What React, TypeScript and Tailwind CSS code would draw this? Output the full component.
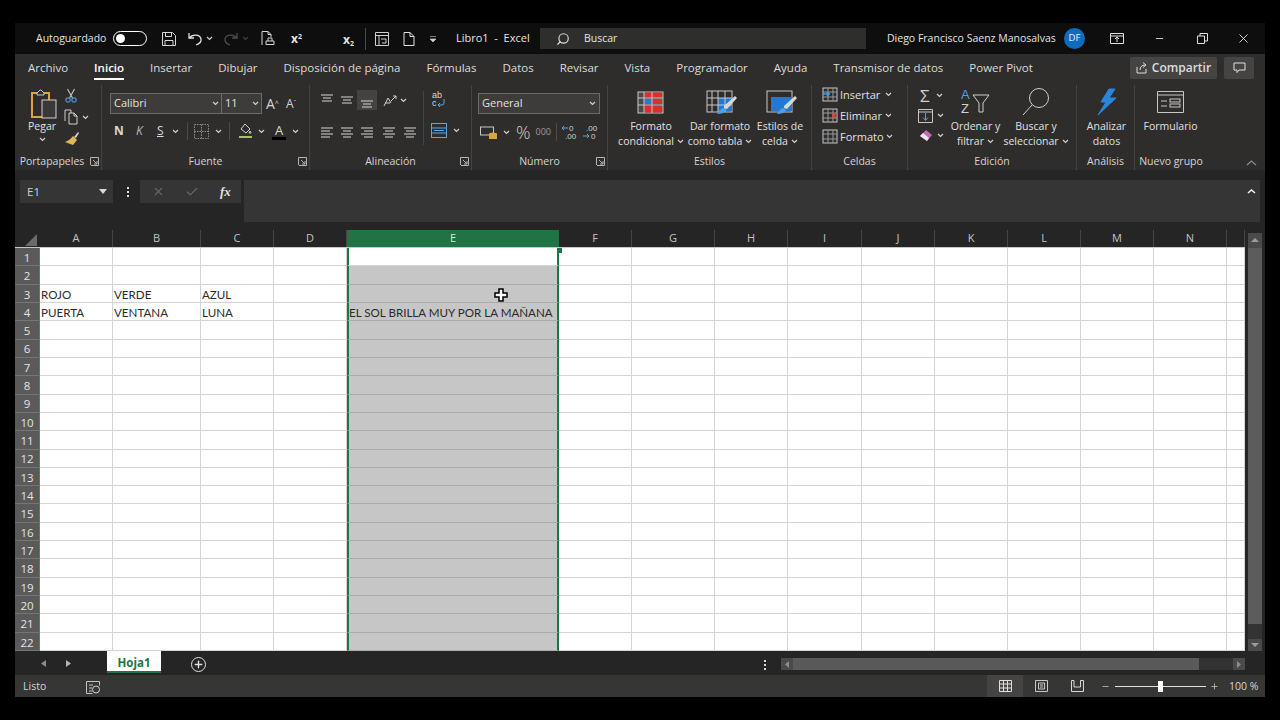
import type React from "react"
import { Search, X, Check, Plus, Minus } from "lucide-react"

const Chev = ({ className = "" }: { className?: string }) => (
  <svg width="7" height="5" viewBox="0 0 7 5" className={`shrink-0 ${className}`}>
    <path d="M1 1l2.5 2.5L6 1" fill="none" stroke="#d0d0d0" strokeWidth="1.2" />
  </svg>
)

const Launcher = ({ className = "" }: { className?: string }) => (
  <svg width="9" height="9" viewBox="0 0 9 9" className={className}>
    <path d="M.5 8V.5H8.500M8.500.5V8.500H1M3 3l4 4M4 7h3V4" fill="none" stroke="#b4b4b4" strokeWidth="1" />
  </svg>
)

const Lines = ({ aligns, highlight }: { aligns: string; highlight?: boolean }) => {
  const paths: Record<string, string> = {
    top: "M2 3h12M4 6h8M3 9h10",
    mid: "M2 5h12M4 8h8M3 11h10",
    bot: "M2 9h12M4 12h8M3 15h10",
    left: "M2 3h12M2 6h9M2 9h12M2 12h9",
    center: "M2 3h12M4 6h8M2 9h12M4 12h8",
    right: "M2 3h12M5 6h9M2 9h12M5 12h9",
  }
  return (
    <span className={`flex h-5 w-5 items-center justify-center ${highlight ? "bg-[#444342]" : ""}`}>
      <svg width="16" height="16" viewBox="0 0 16 16">
        <path d={paths[aligns]} stroke="#d6d6d6" strokeWidth="1" fill="none" />
      </svg>
    </span>
  )
}

const Group = ({ width, label, children, launcher, sep = true, labelClass = "" }: { width: number; label: string; children: React.ReactNode; launcher?: boolean; sep?: boolean; labelClass?: string }) => (
  <div className={`relative flex h-full shrink-0 flex-col ${sep ? "border-r border-[#444342]" : ""}`} style={{ width }}>
    <div className="min-h-0 flex-1">{children}</div>
    <div className={`flex h-[17px] items-center justify-center text-[10.500px] text-[#d4d4d4] ${labelClass}`}>{label}</div>
    {launcher && <Launcher className="absolute bottom-[4px] right-[2px]" />}
  </div>
)

const BigButton = ({ icon, lines, width, chev = true }: { icon: React.ReactNode; lines: string[]; width: number; chev?: boolean }) => (
  <div className="flex shrink-0 flex-col items-center" style={{ width }}>
    <div className="flex h-[31px] items-center justify-center">{icon}</div>
    <div className="mt-[2px] text-center text-[10.500px] leading-[15px] text-[#e0e0e0]">
      <div className="whitespace-nowrap">{lines[0]}</div>
      {lines[1] && (
        <div className="flex items-center justify-center gap-[3px] whitespace-nowrap">
          {lines[1]}
          {chev && <Chev />}
        </div>
      )}
    </div>
  </div>
)

const TableIcon = ({ variant }: { variant: "cond" | "table" | "cell" }) => (
  <svg width="36" height="30" viewBox="0 0 36 30">
    {variant === "cond" ? (
      <g>
        <rect x="5" y="5" width="25" height="21" fill="#4a4a4a" stroke="#c8c8c8" />
        <rect x="11" y="5.500" width="18" height="5" fill="#d9302c" />
        <rect x="11" y="12" width="8" height="5" fill="#2a78d0" />
        <rect x="19" y="12" width="10" height="5" fill="#d9302c" />
        <rect x="11" y="19" width="18" height="6.500" fill="#d9302c" />
        <path d="M11 5v21M19 5v21M5 11h25M5 18h25" stroke="#c8c8c8" />
      </g>
    ) : (
      <g>
        <rect x="5" y="4" width="25" height="21" fill="none" stroke="#c8c8c8" />
        <rect x={variant === "cell" ? 9 : 16} y={variant === "cell" ? 10 : 11} width={variant === "cell" ? 21 : 14} height={variant === "cell" ? 14 : 13} fill="#2478cf" />
        {variant === "table" && <path d="M5 11h25M5 18h25M16 4v21M10 4v21M23 4v21" stroke="#c8c8c8" />}
        <path d="M35 11L25 22l-3-1 0-2L33 9z" fill="#d8d8d8" />
        <path d="M22 21c-3 0-5 3-7 6 4 0 7-1 9-4z" fill="#4aa3e8" />
      </g>
    )}
  </svg>
)

const SmallTable = ({ kind }: { kind: "ins" | "del" | "fmt" }) => (
  <svg width="16" height="15" viewBox="0 0 16 15">
    <rect x="1" y="1" width="14" height="13" fill="none" stroke="#c8c8c8" />
    <path d="M1 5h14M1 10h14M6 1v13M11 1v13" stroke="#9a9a9a" />
    {kind === "ins" && <path d="M1 7h7M5 5l2 2-2 2" stroke="#3fa0ea" strokeWidth="1.500" fill="none" />}
    {kind === "del" && <path d="M10 5l4 5M14 5l-4 5" stroke="#e04a3a" strokeWidth="1.500" fill="none" />}
  </svg>
)

const colWidths = [73, 88, 73, 73, 212, 73, 83, 73, 74, 73, 73, 73, 73, 73, 18]
const colNames = ["A", "B", "C", "D", "E", "F", "G", "H", "I", "J", "K", "L", "M", "N", ""]
const gridCols = "grid-cols-[73px_88px_73px_73px_212px_73px_83px_73px_74px_73px_73px_73px_73px_73px_18px]"
const rows = Array.from({ length: 22 }, (_, i) => i + 1)
const cellData: Record<string, string> = {
  "3-0": "ROJO", "3-1": "VERDE", "3-2": "AZUL",
  "4-0": "PUERTA", "4-1": "VENTANA", "4-2": "LUNA", "4-4": "EL SOL BRILLA MUY POR LA MAÑANA",
}
const tabs = ["Archivo", "Inicio", "Insertar", "Dibujar", "Disposición de página", "Fórmulas", "Datos", "Revisar", "Vista", "Programador", "Ayuda", "Transmisor de datos", "Power Pivot"]

function TitleBar() {
  return (
    <div className="flex h-[31px] shrink-0 items-center bg-[#0e0e0e] text-[10.500px] text-[#e4e4e4]">
      <span className="ml-[21px] w-[77px] whitespace-nowrap">Autoguardado</span>
      <span className="flex h-[15px] w-[34px] items-center rounded-full border border-white pl-[2px]">
        <span className="h-[9px] w-[9px] rounded-full bg-white" />
      </span>
      <svg width="16" height="16" viewBox="0 0 16 16" className="ml-[14px]">
        <path d="M1.500 1.500h10l3 3v10h-13zM4.500 1.500v4h6v-4M4 14.500v-5h8v5" fill="none" stroke="#d8d8d8" />
      </svg>
      <svg width="16" height="16" viewBox="0 0 16 16" className="ml-[10px]">
        <path d="M2 2v5h5M2.500 7C5 3 13 3 14 8c.5 3-2 5-5 6" fill="none" stroke="#e0e0e0" strokeWidth="1.300" />
      </svg>
      <Chev className="ml-[3px]" />
      <svg width="16" height="16" viewBox="0 0 16 16" className="ml-[10px]">
        <path d="M14 2v5H9M13.500 7C11 3 3 3 2 8c-.5 3 2 5 5 6" fill="none" stroke="#4c4c4c" strokeWidth="1.300" />
      </svg>
      <Chev className="ml-[3px] opacity-25" />
      <svg width="16" height="17" viewBox="0 0 16 17" className="ml-[11px]">
        <path d="M2 15V1.500h6l3 3V7M8 1.500v3h3M6 11h8v3.500H6zM8 11V8h4v3" fill="none" stroke="#d8d8d8" />
      </svg>
      <span className="ml-[15px] w-[43px] text-[12px] font-bold leading-none">x<sup className="text-[7px]">2</sup></span>
      <span className="ml-[9px] w-[16px] pt-[3px] text-[12px] font-bold leading-none">x<sub className="text-[7px]">2</sub></span>
      <span className="ml-[6px] h-[22px] w-px bg-[#4a4a4a]" />
      <svg width="16" height="16" viewBox="0 0 16 16" className="ml-[8px]">
        <path d="M1.500 1.500h13v13h-13zM1.500 4.500h13M5 4.500v10M7 8h5v4H8" fill="none" stroke="#d0d0d0" />
      </svg>
      <svg width="14" height="16" viewBox="0 0 14 16" className="ml-[12px]">
        <path d="M2 1.500h6l4 4v9H2zM8 1.500v4h4" fill="none" stroke="#e0e0e0" />
      </svg>
      <svg width="8" height="8" viewBox="0 0 8 8" className="ml-[13px]">
        <path d="M1 1.500h6M1 4h6L4 7z" fill="#d0d0d0" stroke="#d0d0d0" strokeWidth=".6" />
      </svg>
      <span className="ml-[19px] w-[84px] whitespace-pre text-[11px]">Libro1  -  Excel</span>
      <div className="flex h-[21px] w-[326px] items-center bg-[#2e2e2d]">
        <Search size={14} className="ml-[16px] -scale-x-100 text-[#dcdcdc]" />
        <span className="ml-[14px]">Buscar</span>
      </div>
      <span className="ml-[21px] w-[167px] whitespace-nowrap">Diego Francisco Saenz Manosalvas</span>
      <span className="ml-[10px] flex h-[21px] w-[21px] items-center justify-center rounded-full bg-[#0f6cbd] text-[9.500px] text-[#e8f2fb]">DF</span>
      <svg width="14" height="11" viewBox="0 0 14 11" className="ml-[25px]">
        <path d="M.500.500h13v10H.500zM.500 3h13M7 9V4.500M5 6l2-2 2 2" fill="none" stroke="#e0e0e0" />
      </svg>
      <Minus size={11} className="ml-[30px] text-[#d8d8d8]" />
      <svg width="11" height="11" viewBox="0 0 11 11" className="ml-[32px]">
        <path d="M.500 3h7v7.500H.500zM3 3V.500h7.500V8H8" fill="none" stroke="#e0e0e0" />
      </svg>
      <X size={15} strokeWidth={1.400} className="ml-[28px] text-[#e8e8e8]" />
    </div>
  )
}

function TabRow() {
  return (
    <div className="flex h-[31px] shrink-0 items-center bg-[#2e2d2c] pb-[3px] pl-[13px] text-[11.500px] text-[#dcdcdc]">
      <div className="flex gap-[26px]">
        {tabs.map((t) => (
          <span key={t} className={`relative whitespace-nowrap ${t === "Inicio" ? "font-semibold text-white" : ""}`}>
            {t}
            {t === "Inicio" && <span className="absolute -bottom-[3px] left-0 h-[2px] w-full bg-white" />}
          </span>
        ))}
      </div>
      <div className="ml-auto mr-[11px] flex items-center gap-[7px]">
        <div className="flex h-[22px] w-[87px] items-center justify-center gap-[4px] rounded-[2px] bg-[#454443] text-[12px] font-semibold">
          <svg width="12" height="12" viewBox="0 0 12 12">
            <path d="M1 5v6h9V7M4 8c0-3 2-5 5-5M7 .500l3 2.500-3 2.500" fill="none" stroke="#dcdcdc" />
          </svg>
          Compartir
        </div>
        <div className="flex h-[22px] w-[30px] items-center justify-center rounded-[2px] bg-[#454443]">
          <svg width="13" height="12" viewBox="0 0 13 12">
            <path d="M1 1h11v7H6l-2 2.500V8H1z" fill="none" stroke="#e0e0e0" />
          </svg>
        </div>
      </div>
    </div>
  )
}

function Ribbon() {
  return (
    <div className="relative flex h-[85px] shrink-0 bg-[#2e2d2c]">
      <Group width={87} label="Portapapeles" launcher labelClass="pr-[12px]">
        <div className="flex pl-[10px] pt-[3px]">
          <div className="flex w-[34px] flex-col items-center">
            <svg width="28" height="31" viewBox="0 0 28 31" className="ml-[4px]">
              <path d="M2 5h17v24H2z" fill="none" stroke="#d9a441" strokeWidth="2" />
              <path d="M7 5l3-3h1l3 3v2H7z" fill="#2e2d2c" stroke="#c8c8c8" />
              <rect x="12" y="12" width="14" height="18" fill="#3a3938" stroke="#d0d0d0" />
            </svg>
            <span className="text-[10.500px] leading-[15px] text-[#e0e0e0]">Pegar</span>
            <Chev className="mt-[3px]" />
          </div>
          <div className="ml-[5px] flex flex-col gap-[2px]">
            <svg width="14" height="15" viewBox="0 0 14 15">
              <path d="M3.500 1l5 9M10.500 1l-5 9" fill="none" stroke="#c4c4c4" strokeWidth="1.100" />
              <circle cx="4" cy="12" r="2.200" fill="none" stroke="#4a8fd0" strokeWidth="1.200" />
              <circle cx="10" cy="12" r="2.200" fill="none" stroke="#4a8fd0" strokeWidth="1.200" />
            </svg>
            <div className="mt-[4px] flex items-center gap-[3px]">
              <svg width="15" height="16" viewBox="0 0 15 16">
                <path d="M1 12V1h6v3M5 4h5l3 3v8H5zM10 4v3h3" fill="none" stroke="#d0d0d0" />
              </svg>
              <Chev />
            </div>
            <svg width="16" height="15" viewBox="0 0 16 15" className="mt-[4px]">
              <path d="M10 6l4-5 1 1-3 5z" fill="#d0d0d0" />
              <path d="M9 5l4 4-4 5-8-3c3-1 6-3 8-6z" fill="#e2b75a" />
            </svg>
          </div>
        </div>
      </Group>
      <Group width={208} label="Fuente" launcher>
        <div className="flex pl-[8px] pt-[8px]">
          <div className="flex h-[21px] w-[112px] items-center justify-between border border-[#6a6a6a] bg-[#3d3c3b] px-[3px] pr-[2px] text-[11px] text-[#e0e0e0]">
            Calibri <Chev />
          </div>
          <div className="flex h-[21px] w-[40px] items-center justify-between border border-l-0 border-[#6a6a6a] bg-[#3d3c3b] px-[3px] pr-[2px] text-[11px] text-[#e0e0e0]">
            11 <Chev />
          </div>
          <span className="ml-[4px] text-[14px] leading-[21px] text-[#d4d4d4]">A<sup className="text-[7px]">^</sup></span>
          <span className="ml-[7px] text-[12px] leading-[21px] text-[#d4d4d4]">A<sup className="text-[7px]">ˇ</sup></span>
        </div>
        <div className="mt-[7px] flex h-[20px] items-center pl-[12px] text-[12px] text-[#d8d8d8]">
          <span className="w-[10px] font-bold">N</span>
          <span className="ml-[12px] w-[8px] italic text-[#b8b8b8]">K</span>
          <span className="ml-[13px] w-[7px] underline">S</span>
          <Chev className="ml-[8px]" />
          <span className="ml-[8px] h-[18px] w-px bg-[#4a4a4a]" />
          <svg width="15" height="15" viewBox="0 0 15 15" className="ml-[6px]">
            <path d="M.500.500h14v14H.500zM7.500.500v14M.500 7.500h14" fill="none" stroke="#8a8a8a" strokeDasharray="1.500 1" />
          </svg>
          <Chev className="ml-[6px]" />
          <span className="ml-[7px] h-[18px] w-px bg-[#4a4a4a]" />
          <svg width="15" height="16" viewBox="0 0 15 16" className="ml-[8px]">
            <path d="M7 1l5 5-4 4-5-4zM12 8c1 1 1 2 1 2H11z" fill="none" stroke="#d0d0d0" />
            <path d="M1 13h13v2H1z" fill="#a3c45e" />
          </svg>
          <Chev className="ml-[5px]" />
          <span className="ml-[7px] flex w-[14px] flex-col items-center text-[13px] leading-[14px]">
            A
            <span className="h-[3px] w-[14px] bg-black" />
          </span>
          <Chev className="ml-[6px]" />
        </div>
      </Group>
      <Group width={162} label="Alineación" launcher>
        <div className="flex">
          <div className="w-[113px] pl-[7px]">
            <div className="flex h-[30px] items-center gap-0">
              <Lines aligns="top" />
              <Lines aligns="mid" />
              <Lines aligns="bot" highlight />
              <svg width="16" height="15" viewBox="0 0 16 15" className="ml-[5px]">
                <path d="M2 13l4-8 3 5M3 10h5M9 8l5-5M11 3h3v3" fill="none" stroke="#d0d0d0" />
              </svg>
              <Chev className="ml-[2px]" />
            </div>
            <div className="mt-[8px] flex items-center">
              <Lines aligns="left" />
              <Lines aligns="center" />
              <Lines aligns="right" />
              <span className="ml-[2px]"><Lines aligns="center" /></span>
              <span className="ml-[1px]"><Lines aligns="center" /></span>
            </div>
          </div>
          <span className="mt-[6px] h-[54px] w-px bg-[#444342]" />
          <div className="pl-[7px]">
            <svg width="16" height="30" viewBox="0 0 16 30">
              <text x="1" y="13" fontSize="9" fill="#d8d8d8" fontFamily="Liberation Sans">ab</text>
              <text x="1" y="21" fontSize="9" fill="#d8d8d8" fontFamily="Liberation Sans">c</text>
              <path d="M13 14v4a2 2 0 01-2 2H7M9 18l-2 2 2 2" fill="none" stroke="#5da5e0" />
            </svg>
            <div className="mt-[8px] flex items-center gap-[6px]">
              <svg width="16" height="15" viewBox="0 0 16 15">
                <rect x=".5" y=".5" width="15" height="14" fill="none" stroke="#5da5e0" />
                <path d="M.5 5h15M.5 10h15M3 7.500h10" stroke="#5da5e0" />
              </svg>
              <Chev />
            </div>
          </div>
        </div>
      </Group>
      <Group width={136} label="Número" launcher>
        <div className="pl-[6px] pt-[8px]">
          <div className="flex h-[21px] w-[122px] items-center justify-between border border-[#6a6a6a] bg-[#3d3c3b] px-[3px] text-[11px] text-[#e0e0e0]">
            General <Chev />
          </div>
          <div className="mt-[7px] flex h-[22px] items-center pl-[2px] text-[#d0d0d0]">
            <svg width="18" height="15" viewBox="0 0 18 15">
              <rect x=".5" y="2" width="13" height="8" fill="none" stroke="#c8c8c8" />
              <ellipse cx="13" cy="9" rx="4" ry="1.500" fill="#d9a441" />
              <rect x="9" y="9" width="8" height="5" fill="#d9a441" />
            </svg>
            <Chev className="ml-[5px]" />
            <span className="ml-[6px] text-[18px] font-light leading-none">%</span>
            <span className="ml-[5px] text-[9px] text-[#9c9c9c]">000</span>
            <span className="ml-[5px] h-[18px] w-px bg-[#4a4a4a]" />
            <svg width="17" height="18" viewBox="0 0 17 18" className="ml-[4px]">
              <path d="M7 5H1M3 3L1 5l2 2" fill="none" stroke="#58a6e6" />
              <text x="8" y="8" fontSize="8" fill="#d0d0d0" fontFamily="Liberation Sans">0</text>
              <text x="4" y="16" fontSize="8" fill="#d0d0d0" fontFamily="Liberation Sans">.00</text>
            </svg>
            <svg width="17" height="18" viewBox="0 0 17 18" className="ml-[4px]">
              <text x="4" y="8" fontSize="8" fill="#d0d0d0" fontFamily="Liberation Sans">.00</text>
              <path d="M1 13h6M5 11l2 2-2 2" fill="none" stroke="#58a6e6" />
              <text x="9" y="16" fontSize="8" fill="#d0d0d0" fontFamily="Liberation Sans">0</text>
            </svg>
          </div>
        </div>
      </Group>
      <Group width={204} label="Estilos">
        <div className="flex pl-[9px] pt-[1px]">
          <BigButton width={68} icon={<TableIcon variant="cond" />} lines={["Formato", "condicional"]} />
          <BigButton width={70} icon={<TableIcon variant="table" />} lines={["Dar formato", "como tabla"]} />
          <BigButton width={50} icon={<TableIcon variant="cell" />} lines={["Estilos de", "celda"]} />
        </div>
      </Group>
      <Group width={96} label="Celdas">
        <div className="flex flex-col gap-[6px] pl-[10px] pt-[2px] text-[11px] text-[#e0e0e0]">
          {[
            { k: "ins" as const, t: "Insertar", w: 45 },
            { k: "del" as const, t: "Eliminar", w: 45 },
            { k: "fmt" as const, t: "Formato", w: 46 },
          ].map((r) => (
            <div key={r.t} className="flex h-[15px] items-center">
              <SmallTable kind={r.k} />
              <span className="ml-[2px] leading-none" style={{ width: r.w }}>{r.t}</span>
              <Chev />
            </div>
          ))}
        </div>
      </Group>
      <Group width={169} label="Edición">
        <div className="flex pt-[1px]">
          <div className="flex w-[44px] flex-col items-start gap-[5px] pl-[10px] pt-[2px]">
            <div className="flex h-[15px] items-center gap-[6px] pl-[2px] text-[17px] leading-none text-[#d0d0d0]">Σ<Chev /></div>
            <div className="flex h-[15px] items-center gap-[4px]">
              <svg width="15" height="14" viewBox="0 0 15 14">
                <path d="M.500.500h14v13H.500zM.500 3h14" fill="none" stroke="#c8c8c8" />
                <path d="M7.500 4v7M5 8.500l2.500 3 2.500-3" fill="none" stroke="#4aa3e8" />
              </svg>
              <Chev />
            </div>
            <div className="flex h-[15px] items-center gap-[4px]">
              <svg width="15" height="14" viewBox="0 0 15 14">
                <path d="M8 1l6 5-5 6-7-5z" fill="#c667b8" />
                <path d="M2 7l3-3 6 5-2 3z" fill="#e8e8e8" />
              </svg>
              <Chev />
            </div>
          </div>
          <BigButton
            width={47}
            icon={
              <svg width="30" height="30" viewBox="0 0 30 30">
                <text x="0" y="12" fontSize="13" fill="#4aa3e8" fontFamily="Liberation Sans">A</text>
                <text x="0" y="26" fontSize="13" fill="#d0d0d0" fontFamily="Liberation Sans">Z</text>
                <path d="M12 8h16l-6 8v9h-4v-9z" fill="none" stroke="#d0d0d0" />
              </svg>
            }
            lines={["Ordenar y", "filtrar"]}
          />
          <BigButton
            width={74}
            icon={
              <svg width="28" height="30" viewBox="0 0 28 30">
                <circle cx="17" cy="11" r="9.500" fill="none" stroke="#d0d0d0" />
                <path d="M10 18L1 28" stroke="#d0d0d0" />
              </svg>
            }
            lines={["Buscar y", "seleccionar"]}
          />
        </div>
      </Group>
      <Group width={58} label="Análisis">
        <div className="pl-[1px] pt-[1px]">
          <BigButton
            width={57}
            icon={
              <svg width="24" height="28" viewBox="0 0 24 28">
                <path d="M14 1L6 14h5L3 27 21 10h-7l6-9z" fill="#2a86dc" stroke="#2a86dc" />
              </svg>
            }
            lines={["Analizar", "datos"]}
            chev={false}
          />
        </div>
      </Group>
      <Group width={72} label="Nuevo grupo" sep={false}>
        <div className="pt-[1px]">
          <BigButton
            width={71}
            icon={
              <svg width="27" height="22" viewBox="0 0 27 22">
                <path d="M.500.500h26v21H.500zM.500 4h26M4 10h6M4 15h6" fill="none" stroke="#c8c8c8" />
                <rect x="13" y="8" width="10" height="3" fill="none" stroke="#c8c8c8" />
                <rect x="13" y="13" width="10" height="3" fill="none" stroke="#c8c8c8" />
              </svg>
            }
            lines={["Formulario"]}
          />
        </div>
      </Group>
      <svg width="11" height="7" viewBox="0 0 11 7" className="absolute bottom-[4px] right-[8px]">
        <path d="M1 6l4.500-4L10 6" fill="none" stroke="#8c8c8c" strokeWidth="1.300" />
      </svg>
    </div>
  )
}

function FormulaBar() {
  return (
    <div className="flex h-[60px] shrink-0 items-start bg-[#252525] pt-[10px] text-[#d0d0d0]">
      <div className="ml-[5px] flex h-[23px] w-[93px] items-center justify-between bg-[#353535] pl-[7px] pr-[6px] text-[11.500px]">
        E1
        <svg width="8" height="5" viewBox="0 0 8 5"><path d="M0 0h8L4 5z" fill="#d8d8d8" /></svg>
      </div>
      <div className="ml-[13px] flex h-[23px] w-[3px] flex-col items-center justify-center gap-[2px]">
        <span className="h-[2px] w-[2px] bg-[#e0e0e0]" />
        <span className="h-[2px] w-[2px] bg-[#e0e0e0]" />
        <span className="h-[2px] w-[2px] bg-[#e0e0e0]" />
      </div>
      <div className="ml-[11px] flex h-[23px] w-[101px] items-center bg-[#353535]">
        <X size={13} className="ml-[12px] text-[#686868]" />
        <Check size={14} className="ml-[20px] text-[#686868]" />
        <span className="ml-[21px] font-['Liberation_Serif'] text-[13px] font-bold italic text-[#e0e0e0]">fx</span>
      </div>
      <div className="relative ml-[3px] h-[42px] w-[1016px] bg-[#353535]">
        <svg width="9" height="6" viewBox="0 0 9 6" className="absolute right-[4px] top-[8px]">
          <path d="M1 5l3.500-3L8 5" fill="none" stroke="#f0f0f0" strokeWidth="1.600" />
        </svg>
      </div>
    </div>
  )
}

function Sheet() {
  return (
    <div className="flex min-h-0 flex-1 bg-[#252525]">
      <div className="flex w-[1230px] shrink-0 flex-col">
        <div className="flex h-[18px] shrink-0 border-b border-[#c8c8c8]">
          <div className="flex w-[25px] shrink-0 items-end justify-end pb-[1px] pr-[3px]">
            <svg width="12" height="12" viewBox="0 0 12 12"><path d="M12 0v12H0z" fill="#6a6a6a" /></svg>
          </div>
          <div className={`grid flex-1 ${gridCols}`}>
            {colNames.map((c, i) => (
              <div
                key={i}
                className={`flex items-center justify-center text-[11px] ${
                  c === "E" ? "bg-[#217346] text-[#cdeedb]" : "border-r border-[#454545] text-[#c4c4c4]"
                }`}
                style={{ width: colWidths[i] }}
              >
                {c}
              </div>
            ))}
          </div>
        </div>
        <div className="flex h-[403px] shrink-0">
          <div className="grid w-[25px] shrink-0 grid-rows-[repeat(22,1fr)] border-r border-[#3f8a63] bg-[#5a5a5a] leading-none">
            {rows.map((r) => (
              <div key={r} className="flex min-h-0 items-center justify-center border-b border-[#757575] pt-[2px] text-[11.500px] text-[#e4e4e4]">{r}</div>
            ))}
          </div>
          <div className={`relative grid flex-1 grid-rows-[repeat(22,1fr)] bg-white font-['Lato','Liberation_Sans',sans-serif] text-[11.600px] leading-none text-[#2a2a2a] ${gridCols}`}>
            {rows.map((r) =>
              colNames.map((_, c) => (
                <div
                  key={`${r}-${c}`}
                  className={`flex min-h-0 items-center whitespace-nowrap border-b pt-[3px] ${
                    c === 4
                      ? `border-x-2 border-x-[#217346] ${r === 1 ? "border-b-[#d4d4d4] bg-white" : "border-b-[#ababab] bg-[#c6c6c6]"}`
                      : "border-r border-[#d4d4d4] pl-[1px]"
                  }`}
                >
                  {cellData[`${r}-${c}`]}
                </div>
              ))
            )}
            <span className="absolute left-[517px] top-0 h-[5px] w-[5px] bg-[#217346]" />
            <svg width="14" height="14" viewBox="0 0 14 14" className="absolute left-[454px] top-[40px]">
              <path d="M5 1h4v4h4v4H9v4H5V9H1V5h4z" fill="#fff" stroke="#000" strokeWidth="1.500" />
            </svg>
          </div>
        </div>
      </div>
      <div className="ml-[3px] flex w-[14px] flex-col pt-[3px]">
        <div className="flex h-[15px] items-center justify-center bg-[#4a4a4a]">
          <svg width="8" height="4" viewBox="0 0 8 4"><path d="M0 4h8L4 0z" fill="#9c9c9c" /></svg>
        </div>
        <div className="h-[377px] bg-[#5c5c5c]" />
        <div className="h-[15px] bg-[#333]" />
        <div className="flex h-[12px] items-center justify-center bg-[#4a4a4a]">
          <svg width="8" height="4" viewBox="0 0 8 4"><path d="M0 0h8L4 4z" fill="#9c9c9c" /></svg>
        </div>
      </div>
    </div>
  )
}

function SheetTabs() {
  return (
    <div className="flex h-[24px] shrink-0 items-start bg-[#252525]">
      <svg width="5" height="7" viewBox="0 0 5 7" className="ml-[26px] mt-[9px]"><path d="M5 0v7L0 3.500z" fill="#8c8c8c" /></svg>
      <svg width="5" height="7" viewBox="0 0 5 7" className="ml-[20px] mt-[9px]"><path d="M0 0v7l5-3.500z" fill="#b4b4b4" /></svg>
      <div className="ml-[36px] flex h-[22px] w-[54px] items-center justify-center border-b-2 border-[#217346] bg-white pt-[4px] text-[11.500px] font-bold leading-none text-[#217346]">
        Hoja1
      </div>
      <span className="ml-[30px] mt-[6px] flex h-[15px] w-[15px] items-center justify-center rounded-full border border-[#e0e0e0]">
        <Plus size={11} strokeWidth={3} className="text-[#e0e0e0]" />
      </span>
      <div className="ml-[557px] mt-[9px] flex h-[10px] w-[3px] flex-col items-center justify-between">
        <span className="h-[2px] w-[2px] bg-[#d8d8d8]" />
        <span className="h-[2px] w-[2px] bg-[#d8d8d8]" />
        <span className="h-[2px] w-[2px] bg-[#d8d8d8]" />
      </div>
      <div className="ml-[15px] mt-[7px] flex h-[12px] w-[464px] bg-[#333]">
        <div className="flex w-[12px] items-center justify-center bg-[#4a4a4a]">
          <svg width="4" height="7" viewBox="0 0 4 7"><path d="M4 0v7L0 3.500z" fill="#8c8c8c" /></svg>
        </div>
        <div className="w-[406px] bg-[#5a5a5a]" />
        <div className="ml-auto flex w-[12px] items-center justify-center bg-[#4a4a4a]">
          <svg width="4" height="7" viewBox="0 0 4 7"><path d="M0 0v7l4-3.500z" fill="#8c8c8c" /></svg>
        </div>
      </div>
    </div>
  )
}

function StatusBar() {
  return (
    <div className="flex h-[22px] shrink-0 items-center bg-[#363635] text-[10.500px] text-[#d4d4d4]">
      <span className="ml-[8px] w-[22px] pt-[2px]">Listo</span>
      <svg width="14" height="13" viewBox="0 0 14 13" className="ml-[41px] mt-[2px]">
        <path d="M.500.500h13v4M.500.500v12h6M3 4h4M3 7h3M3 10h3" fill="none" stroke="#c4c4c4" />
        <circle cx="10" cy="8.500" r="3.500" fill="none" stroke="#d4d4d4" />
      </svg>
      <div className="ml-[887px] flex h-full w-[36px] items-center justify-center bg-[#454443]">
        <svg width="13" height="12" viewBox="0 0 13 12">
          <path d="M.500.500h12v11H.500zM4.500.500v11M8.500.500v11M.500 4h12M.500 8h12" fill="none" stroke="#e0e0e0" />
        </svg>
      </div>
      <svg width="13" height="12" viewBox="0 0 13 12" className="ml-[12px]">
        <path d="M.500.500h12v11H.500zM3.500 3h6v6h-6zM5 5h3M5 7h3" fill="none" stroke="#c8c8c8" />
      </svg>
      <svg width="13" height="12" viewBox="0 0 13 12" className="ml-[23px]">
        <path d="M.500 7V.500h2.500V7h6.500V.500h3v11h-12V7" fill="none" stroke="#d8d8d8" />
      </svg>
      <Minus size={9} className="ml-[17px] text-[#c8c8c8]" />
      <div className="relative ml-[5px] h-px w-[91px] bg-[#e0e0e0]">
        <span className="absolute -top-[5px] left-[43px] h-[11px] w-[5px] bg-white" />
      </div>
      <Plus size={9} className="ml-[4px] text-[#c8c8c8]" />
      <span className="ml-[10px] whitespace-nowrap pt-[1px]">100 %</span>
    </div>
  )
}

export default function App() {
  return (
    <div className="h-[720px] w-[1280px] overflow-hidden bg-black pl-[15px] pt-[23px] font-['Open_Sans','Noto_Sans','Liberation_Sans',sans-serif]">
      <div className="flex h-[674px] w-[1250px] flex-col">
        <TitleBar />
        <TabRow />
        <Ribbon />
        <FormulaBar />
        <Sheet />
        <SheetTabs />
        <StatusBar />
      </div>
    </div>
  )
}
